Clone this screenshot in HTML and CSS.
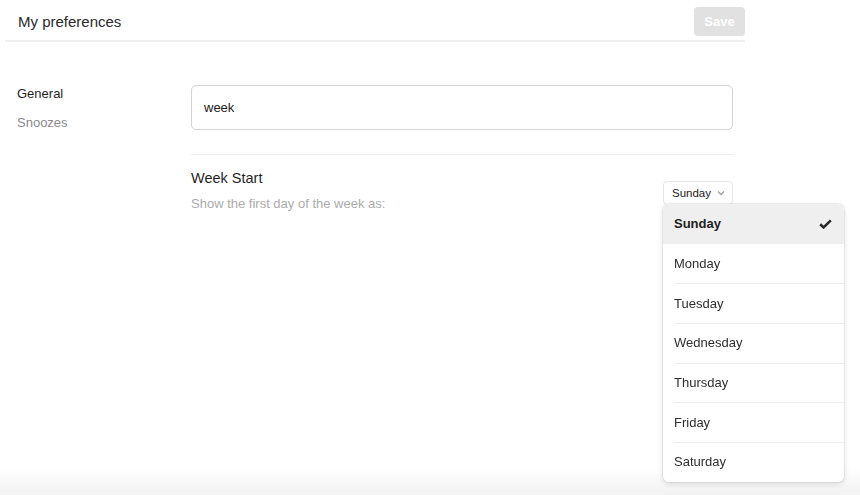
FILE: index.html
```html
<!DOCTYPE html>
<html lang="en">
<head>
<meta charset="utf-8">
<title>My preferences</title>
<link rel="stylesheet" href="styles.css">
</head>
<body>
<div class="page">
  <header class="header">
    <h1 class="title">My preferences</h1>
    <button class="save" disabled>Save</button>
  </header>
  <div class="main">
    <nav class="sidebar">
      <a class="nav-item active">General</a>
      <a class="nav-item">Snoozes</a>
    </nav>
    <section class="content">
      <div class="search">week</div>
      <div class="divider"></div>
      <div class="setting">
        <div class="setting-text">
          <div class="setting-title">Week Start</div>
          <div class="setting-desc">Show the first day of the week as:</div>
        </div>
        <div class="select-wrap">
          <div class="select">Sunday
            <svg class="chev" width="8" height="6" viewBox="0 0 8 6"><path d="M1 1.5 L4 4.5 L7 1.5" fill="none" stroke="#a0a0a0" stroke-width="1.3"/></svg>
          </div>
          <ul class="menu">
            <li class="menu-item selected">Sunday
              <svg class="check" width="13" height="10" viewBox="0 0 13 10"><path d="M1.2 5.2 L4.6 8.4 L11.8 1.4" fill="none" stroke="#2a2a2a" stroke-width="2.6" stroke-linejoin="miter"/></svg>
            </li>
            <li class="menu-item">Monday</li>
            <li class="menu-item sep">Tuesday</li>
            <li class="menu-item sep">Wednesday</li>
            <li class="menu-item sep">Thursday</li>
            <li class="menu-item sep">Friday</li>
            <li class="menu-item sep">Saturday</li>
          </ul>
        </div>
      </div>
    </section>
  </div>
</div>
<div class="bottom-fade"></div>
</body>
</html>
```
FILE: styles.css
```css
* { box-sizing: border-box; }
html, body { margin: 0; padding: 0; background: #fff; }
body {
  font-family: "Liberation Sans", Arial, sans-serif;
  color: #222;
  width: 860px;
  height: 495px;
  overflow: hidden;
}
.page { width: 740px; margin-left: 5px; }
.header {
  height: 42px;
  display: flex;
  align-items: center;
  justify-content: space-between;
  padding-left: 13px;
  padding-top: 3px;
  border-bottom: 2px solid #f0f0f0;
}
.title {
  margin: 0;
  font-size: 15px;
  font-weight: normal;
  color: #2a2a2a;
}
.save {
  width: 51px;
  height: 29px;
  border: none;
  border-radius: 4px;
  background: #e1e1e1;
  color: #fff;
  font-family: inherit;
  font-size: 13px;
  font-weight: bold;
  padding: 0;
}
.main {
  display: flex;
  padding-left: 12px;
}
.sidebar {
  width: 174px;
  display: flex;
  flex-direction: column;
  padding-top: 42px;
}
.nav-item {
  font-size: 13px;
  line-height: 20px;
  height: 29px;
  color: #8a8a8a;
}
.nav-item.active { color: #1e1e1e; }
.content { width: 542px; padding-top: 43px; }
.search {
  height: 45px;
  border: 1px solid #d3d3d3;
  border-radius: 5px;
  padding: 0 12px;
  display: flex;
  align-items: center;
  font-size: 13px;
  color: #222;
}
.divider {
  margin-top: 24px;
  border-top: 1px solid #ececec;
}
.setting {
  display: flex;
  justify-content: space-between;
  padding-top: 14px;
}
.setting-title {
  font-size: 14.5px;
  line-height: 18px;
  color: #1f1f1f;
}
.setting-desc {
  margin-top: 9px;
  font-size: 13px;
  line-height: 16px;
  color: #ababab;
}
.select-wrap { position: relative; margin-top: 12px; }
.select {
  height: 24px;
  width: 70px;
  border: 1px solid #e6e6e6;
  border-radius: 4px;
  display: flex;
  align-items: center;
  padding-left: 8px;
  gap: 6px;
  font-size: 11.5px;
  color: #222;
}
.menu {
  position: absolute;
  top: 23px;
  left: 0;
  width: 181px;
  margin: 0;
  padding: 0;
  list-style: none;
  background: #fff;
  border-radius: 6px;
  box-shadow: 0 0 0 1px rgba(0,0,0,0.06), 0 2px 6px rgba(0,0,0,0.12);
  overflow: hidden;
  z-index: 5;
}
.menu-item {
  position: relative;
  height: 39.7px;
  display: flex;
  align-items: center;
  justify-content: space-between;
  padding: 0 12px 0 11px;
  font-size: 13px;
  color: #2e2e2e;
}
.menu-item.sep::before {
  content: "";
  position: absolute;
  top: 0;
  left: 11px;
  right: 0;
  border-top: 1px solid #ededed;
}
.menu-item.selected {
  background: #efefef;
  font-weight: bold;
  color: #222;
}
.bottom-fade {
  position: fixed;
  left: 0;
  right: 0;
  bottom: 0;
  height: 26px;
  background: linear-gradient(to bottom, rgba(242,242,242,0), #f1f1f1);
  pointer-events: none;
}
```
